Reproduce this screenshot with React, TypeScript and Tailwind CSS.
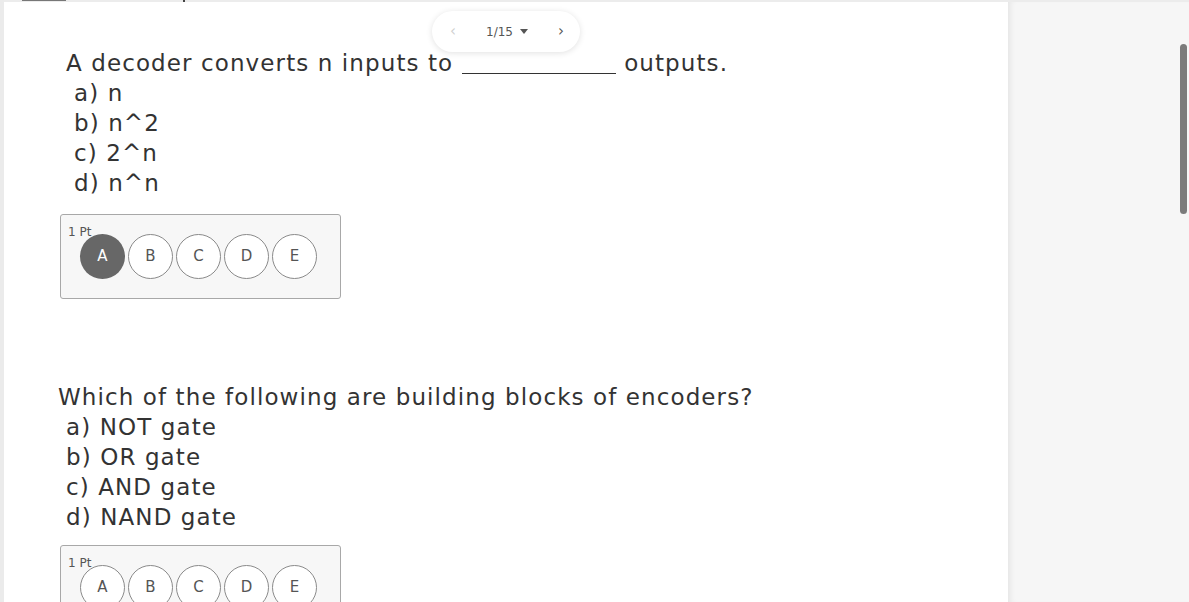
import React from "react";

const font = { fontFamily: "'DejaVu Sans', Verdana, sans-serif" };

function AnswerBox({ selected }: { selected?: string }) {
    const letters = ["A", "B", "C", "D", "E"];
    return (
        <div className="w-[281px] h-[85px] rounded-[3px] border border-[#a8a8a8] bg-[#f7f7f7] flex flex-col pl-[7px] pt-[11px]">
            <span className="relative z-10 self-start text-[12px] leading-none text-[#555]">1 Pt</span>
            <div className="flex gap-[3px] pl-[12px] -mt-[4px]">
                {letters.map((l) => (
                    <div
                        key={l}
                        className={`w-[45px] h-[45px] rounded-full flex items-center justify-center text-[15px] ${
                            l === selected
                                ? "bg-[#676767] text-white"
                                : "bg-white border border-[#8a8a8a] text-[#555]"
                        }`}
                    >
                        {l}
                    </div>
                ))}
            </div>
        </div>
    );
}

export default function App() {
    return (
        <div className="h-[602px] w-full flex overflow-hidden bg-[#f6f6f6]" style={font}>
            {/* left strip */}
            <div className="w-[4px] shrink-0 bg-[#ebebeb]" />

            {/* document */}
            <div className="w-[1004px] shrink-0 flex flex-col">
                <div className="h-[2px] shrink-0 bg-[#ececec] flex items-start pl-[18px]">
                    <div className="w-[44px] h-[1px] bg-[#777]" />
                    <div className="ml-[117px] w-[2px] h-[3px] bg-[#444]" />
                </div>
                <div className="relative flex-1 bg-white text-[#333]">
                    {/* floating pager */}
                    <div className="absolute left-[428px] top-[9px] w-[148px] h-[41px] rounded-full bg-white shadow-[0_1px_6px_rgba(0,0,0,0.12)] flex items-center justify-between pl-[18px] pr-[16px] text-[12px]">
                        <span className="text-[#cfcfcf] text-[15px]">‹</span>
                        <span className="text-[#555] flex items-center gap-[7px]">
                            1/15
                            <svg width="8" height="5" viewBox="0 0 8 5"><path d="M0 0h8L4 5z" fill="#555" /></svg>
                        </span>
                        <span className="text-[#555] text-[15px]">›</span>
                    </div>

                    {/* question 1 */}
                    <div className="pl-[62px] pt-[46px] text-[23px] leading-[30px] tracking-[1.1px]">
                        <p>
                            A decoder converts n inputs to{" "}
                            <span className="inline-block w-[154px] border-b border-[#333] translate-y-[3px]" />{" "}
                            outputs.
                        </p>
                        <div className="pl-[8px]">
                            <p>a) n</p>
                            <p>b) n^2</p>
                            <p>c) 2^n</p>
                            <p>d) n^n</p>
                        </div>
                    </div>
                    <div className="pl-[56px] pt-[16px]">
                        <AnswerBox selected="A" />
                    </div>

                    {/* question 2 */}
                    <div className="pl-[54px] pt-[83px] text-[23px] leading-[30px] tracking-[1.1px]">
                        <p>Which of the following are building blocks of encoders?</p>
                        <div className="pl-[8px]">
                            <p>a) NOT gate</p>
                            <p>b) OR gate</p>
                            <p>c) AND gate</p>
                            <p>d) NAND gate</p>
                        </div>
                    </div>
                    <div className="pl-[56px] pt-[13px]">
                        <AnswerBox />
                    </div>
                </div>
            </div>

            {/* side panel */}
            <div className="relative flex-1 bg-[#f6f6f6] shadow-[inset_6px_0_6px_-4px_rgba(0,0,0,0.08)] border-t-2 border-[#ececec]">
                <div className="absolute right-[2px] top-[42px] w-[7px] h-[170px] rounded-full bg-[#7b7b7b]" />
            </div>
        </div>
    );
}
